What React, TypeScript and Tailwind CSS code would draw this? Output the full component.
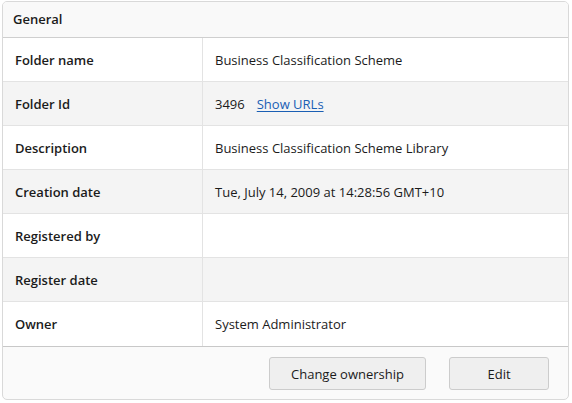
const rows: { label: string; value: React.ReactNode }[] = [
  { label: "Folder name", value: "Business Classification Scheme" },
  {
    label: "Folder Id",
    value: (
      <span className="flex items-center gap-[12px]">
        <span>3496</span>
        <a href="#" className="text-[#1a5fb4] underline underline-offset-2">Show URLs</a>
      </span>
    ),
  },
  { label: "Description", value: "Business Classification Scheme Library" },
  { label: "Creation date", value: "Tue, July 14, 2009 at 14:28:56 GMT+10" },
  { label: "Registered by", value: "" },
  { label: "Register date", value: "" },
  { label: "Owner", value: "System Administrator" },
];

import React from "react";

export default function App() {
  return (
    <div
      className="h-[403px] w-[572px] bg-white pl-[2px] pt-[1px] text-[13px] text-[#1b1b1b]"
      style={{ fontFamily: '"Open Sans", sans-serif' }}
    >
      <div className="flex h-[399px] w-[567px] flex-col overflow-hidden rounded-[5px] border border-[#d9d9d9] bg-[#fafafa]">
        <div className="flex h-[36px] shrink-0 items-center border-b border-[#cfcfcf] bg-[#f9f9f9] pl-[10px] font-semibold">
          General
        </div>
        <div className="flex shrink-0 flex-col border-b border-[#c8c8c8]">
          {rows.map((r, i) => (
            <div
              key={r.label}
              className={`flex h-[44px] ${i < rows.length - 1 ? "border-b border-[#e3e3e3]" : ""} ${
                i % 2 === 1 ? "bg-[#f4f4f4]" : "bg-white"
              }`}
            >
              <div className="flex w-[200px] shrink-0 items-center border-r border-[#e3e3e3] pl-[12px] pt-[2px] font-semibold">
                {r.label}
              </div>
              <div className="flex items-center pl-[12px] pt-[2px]">{r.value}</div>
            </div>
          ))}
        </div>
        <div className="flex flex-1 items-start justify-end gap-[23px] pr-[19px] pt-[10px]">
          <button className="h-[33px] w-[157px] rounded-[3px] border border-[#cccccc] bg-[#efefef] pt-[2px] text-[#1b1b1b]">
            Change ownership
          </button>
          <button className="h-[33px] w-[100px] rounded-[3px] border border-[#cccccc] bg-[#efefef] pt-[2px] text-[#1b1b1b]">
            Edit
          </button>
        </div>
      </div>
    </div>
  );
}
